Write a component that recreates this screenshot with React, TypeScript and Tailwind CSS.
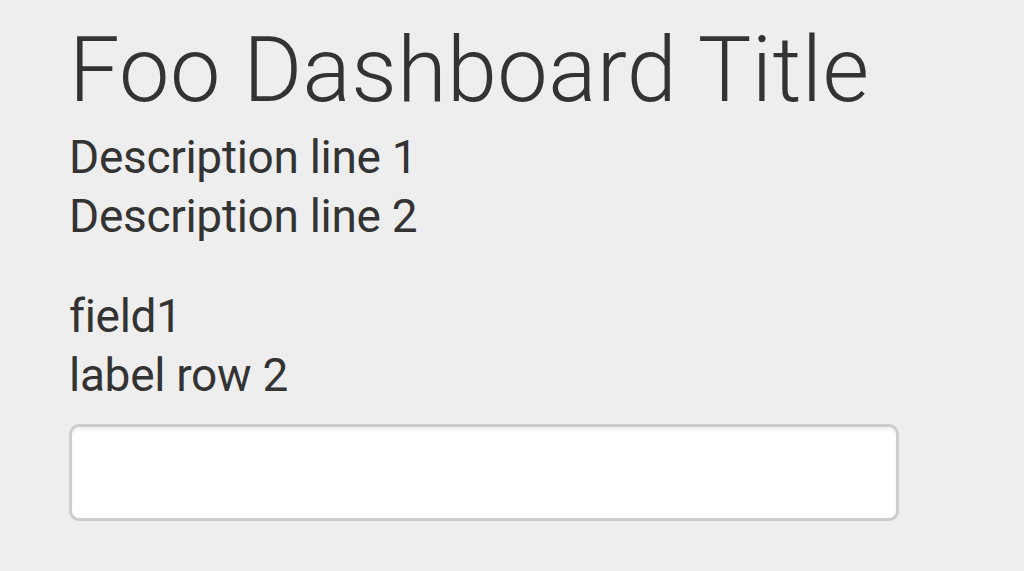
export default function App() {
  return (
    <div className="min-h-[571px] w-full bg-[#eeeeee] text-[#333333] font-['Roboto',sans-serif] px-[69px] pt-[26px]">
      <h1 className="text-[90px] leading-[90px] font-light tracking-[0.4px]">Foo Dashboard Title</h1>
      <div className="mt-[12px] text-[46px] leading-[59px] tracking-[-0.3px]">
        <p>Description line 1</p>
        <p>Description line 2</p>
      </div>
      <label className="mt-[41px] block text-[46px] leading-[59px] tracking-[-0.3px]">
        <span className="block">field1</span>
        <span className="block">label row 2</span>
      </label>
      <input
        type="text"
        className="mt-[19px] block w-[830px] h-[97px] rounded-[10px] border-[3px] border-[#cccccc] bg-white shadow-[inset_0_3px_3px_rgba(0,0,0,0.05)] outline-none"
      />
    </div>
  );
}
